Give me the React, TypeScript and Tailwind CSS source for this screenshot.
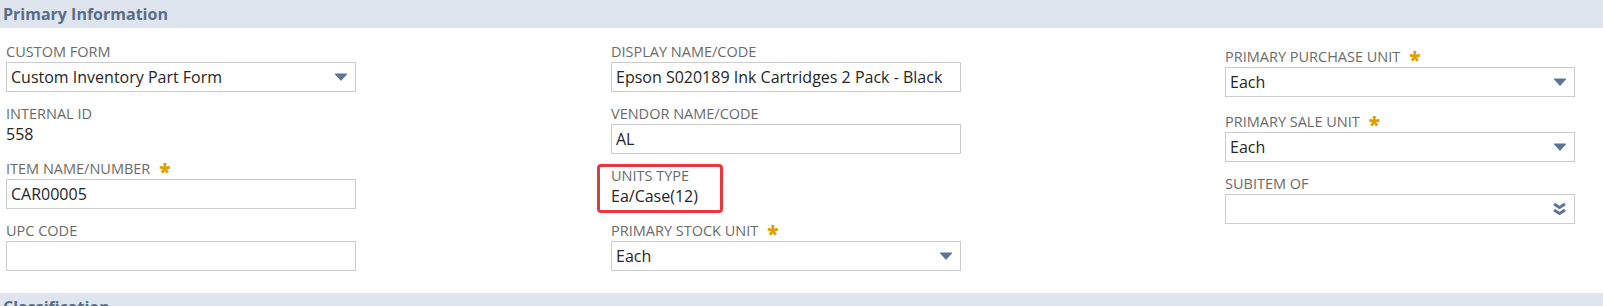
import React from 'react';

const font = { fontFamily: '"Open Sans", "Liberation Sans", sans-serif' };

function Arrow() {
  return (
    <svg width="14" height="8" viewBox="0 0 14 8" className="shrink-0">
      <path d="M1.5 1 H12.5 L7 7 Z" fill="#5f7595" stroke="#5f7595" strokeWidth="1.2" strokeLinejoin="round" />
    </svg>
  );
}

function DoubleChevron() {
  return (
    <svg width="15" height="14" viewBox="0 0 15 14" className="shrink-0">
      <path d="M2 2 L7.5 5.5 L13 2" fill="none" stroke="#5f7595" strokeWidth="3" />
      <path d="M2 8 L7.5 11.5 L13 8" fill="none" stroke="#5f7595" strokeWidth="3" />
    </svg>
  );
}

function Label({ text, required }: { text: string; required?: boolean }) {
  return (
    <div className={`flex items-center h-[16px] text-[14.5px] leading-[16px] uppercase text-[#6b6b6b] ${required ? 'mt-[3px]' : ''}`}>
      <span>{text}</span>
      {required && <span className="ml-[9px] text-[21px] leading-[16px] font-extrabold text-[#e0a000] translate-y-[2px]">*</span>}
    </div>
  );
}

function Box({ value, kind }: { value?: string; kind?: 'select' | 'popup' }) {
  return (
    <div className="mt-[2px] flex items-center justify-between h-[30px] w-[350px] border border-[#cccccc] bg-white pl-[4px] pr-[7px]">
      <span className="text-[16px] text-[#262626] whitespace-nowrap">{value}</span>
      {kind === 'select' && <Arrow />}
      {kind === 'popup' && <DoubleChevron />}
    </div>
  );
}

function Field({ label, required, value, kind }: { label: string; required?: boolean; value?: string; kind?: 'select' | 'popup' }) {
  return (
    <div className="mt-[14px]">
      <Label text={label} required={required} />
      <Box value={value} kind={kind} />
    </div>
  );
}

function ReadOnly({ label, value, highlight }: { label: string; value: string; highlight?: boolean }) {
  return (
    <div className="mt-[14px] relative">
      <Label text={label} />
      <div className="mt-[2px] h-[20px] text-[16px] leading-[20px] text-[#262626]">{value}</div>
      {highlight && (
        <div className="absolute left-[-14px] top-[-4px] w-[126px] h-[49px] border-[3px] border-[#e5393d] rounded-[4px]" />
      )}
    </div>
  );
}

function SectionHeader({ title }: { title: string }) {
  return (
    <div className="h-[28px] bg-[#dfe5ee] flex items-center pl-[3px]">
      <span className="text-[16px] font-bold text-[#5a6d88]">{title}</span>
    </div>
  );
}

export default function App() {
  return (
    <div className="bg-white w-full" style={font}>
      <SectionHeader title="Primary Information" />
      <div className="grid grid-cols-[605px_614px_1fr] pl-[6px] pb-[22px]">
        <div className="flex flex-col pt-[2px]">
          <Field label="Custom Form" value="Custom Inventory Part Form" kind="select" />
          <ReadOnly label="Internal ID" value="558" />
          <Field label="Item Name/Number" required value="CAR00005" />
          <Field label="UPC Code" />
        </div>
        <div className="flex flex-col pt-[2px]">
          <Field label="Display Name/Code" value="Epson S020189 Ink Cartridges 2 Pack - Black" />
          <Field label="Vendor Name/Code" value="AL" />
          <ReadOnly label="Units Type" value="Ea/Case(12)" highlight />
          <Field label="Primary Stock Unit" required value="Each" kind="select" />
        </div>
        <div className="flex flex-col pt-[4px]">
          <Field label="Primary Purchase Unit" required value="Each" kind="select" />
          <Field label="Primary Sale Unit" required value="Each" kind="select" />
          <Field label="Subitem Of" kind="popup" />
        </div>
      </div>
      <SectionHeader title="Classification" />
    </div>
  );
}
